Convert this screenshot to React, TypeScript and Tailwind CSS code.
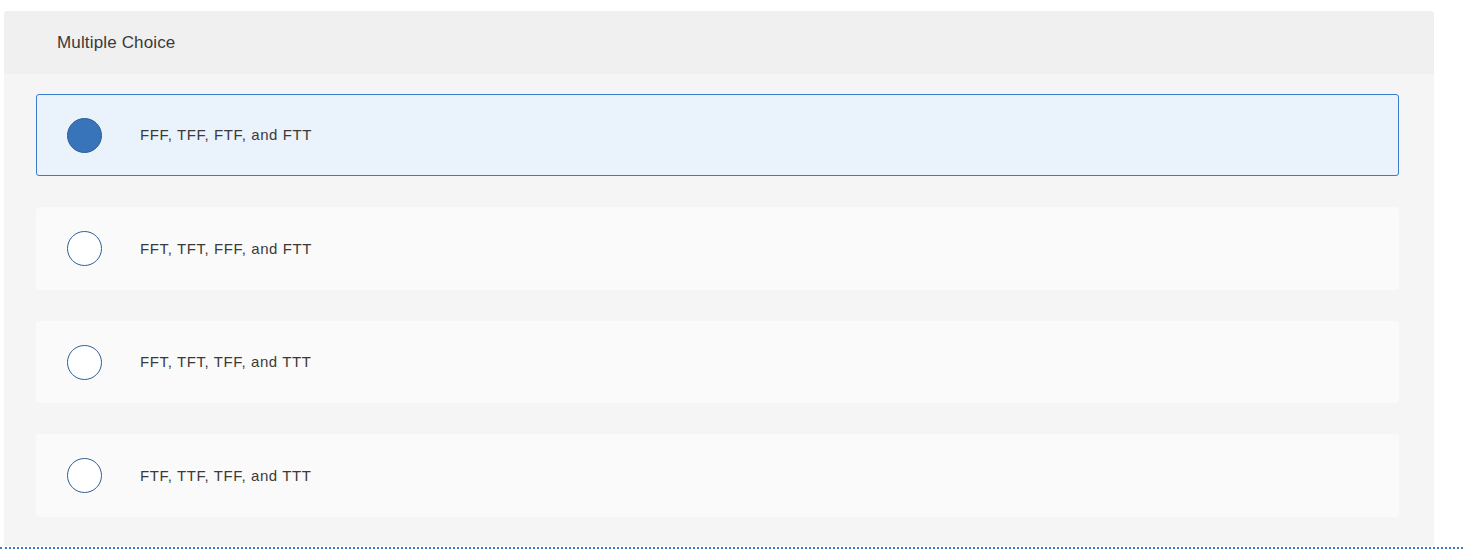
import { useState } from 'react'

const choices = [
  'FFF, TFF, FTF, and FTT',
  'FFT, TFT, FFF, and FTT',
  'FFT, TFT, TFF, and TTT',
  'FTF, TTF, TFF, and TTT',
]

export default function App() {
  const [selected, setSelected] = useState(0)

  return (
    <div className="min-h-screen bg-white pt-[11px] font-['Liberation_Sans',Arial,sans-serif] text-[#333]">
      <div className="ml-[4px] w-[1430px] rounded-t-[3px] overflow-hidden">
        <div className="h-[63px] bg-[#f0f0f0] pl-[53px] flex items-center text-[17px] tracking-[0.15px] text-[#3a3a3a]">
          Multiple Choice
        </div>
        <div className="bg-[#f5f5f5] pl-[32px] pr-[35px] pt-[20px] pb-[29px] flex flex-col gap-[31px]">
          {choices.map((c, i) => {
            const on = i === selected
            const h = i % 2 === 0 ? 'h-[82px]' : 'h-[83px]'
            return (
              <button
                key={c}
                onClick={() => setSelected(i)}
                className={
                  h +
                  (on
                    ? ' w-full flex items-center rounded-[3px] border border-[#3a7bd0] bg-[#eaf2fb] text-left pl-[30px]'
                    : ' w-full flex items-center rounded-[4px] border border-transparent bg-[#fafafa] text-left pl-[30px]')
                }
              >
                <span
                  className={
                    on
                      ? 'w-[35px] h-[35px] rounded-full bg-[#3774b9] border border-[#2b5f9a] shrink-0'
                      : 'w-[35px] h-[35px] rounded-full bg-white border border-[#2f5f96] shrink-0'
                  }
                />
                <span className="ml-[38px] pt-[1px] text-[15px] tracking-[0.6px] text-[#3a3a3a]">{c}</span>
              </button>
            )
          })}
        </div>
      </div>
      <div className="mt-[1px] border-b-2 border-dotted border-[#3b7bc8]" />
    </div>
  )
}
